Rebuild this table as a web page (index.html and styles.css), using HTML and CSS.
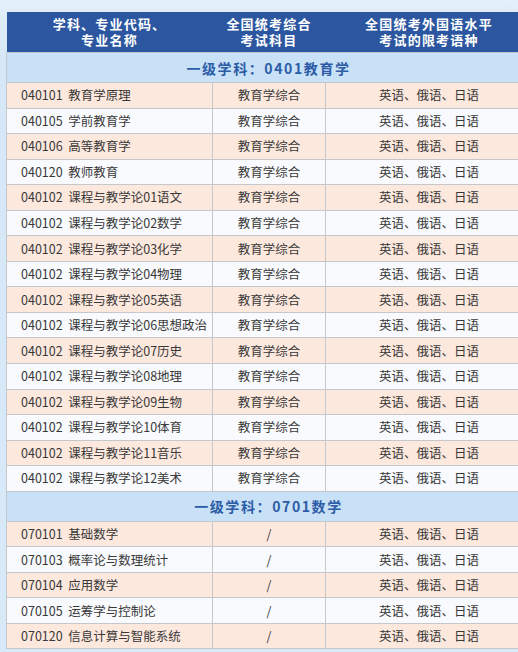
FILE: index.html
```html
<!DOCTYPE html>
<html lang="zh">
<head>
<meta charset="utf-8">
<link rel="stylesheet" href="styles.css">
</head>
<body>
<div class="page">
<table class="tbl">
  <colgroup><col class="c1"><col class="c2"><col class="c3"></colgroup>
  <thead>
    <tr class="head">
      <th>学科、专业代码、<br>专业名称</th>
      <th>全国统考综合<br>考试科目</th>
      <th>全国统考外国语水平<br>考试的限考语种</th>
    </tr>
  </thead>
  <tbody>
    <tr class="sec"><td colspan="3">一级学科：0401教育学</td></tr>
    <tr class="odd"><td class="name">040101&nbsp;&nbsp;教育学原理</td><td>教育学综合</td><td>英语、俄语、日语</td></tr>
    <tr class="even"><td class="name">040105&nbsp;&nbsp;学前教育学</td><td>教育学综合</td><td>英语、俄语、日语</td></tr>
    <tr class="odd"><td class="name">040106&nbsp;&nbsp;高等教育学</td><td>教育学综合</td><td>英语、俄语、日语</td></tr>
    <tr class="even"><td class="name">040120&nbsp;&nbsp;教师教育</td><td>教育学综合</td><td>英语、俄语、日语</td></tr>
    <tr class="odd"><td class="name">040102&nbsp;&nbsp;课程与教学论01语文</td><td>教育学综合</td><td>英语、俄语、日语</td></tr>
    <tr class="even"><td class="name">040102&nbsp;&nbsp;课程与教学论02数学</td><td>教育学综合</td><td>英语、俄语、日语</td></tr>
    <tr class="odd"><td class="name">040102&nbsp;&nbsp;课程与教学论03化学</td><td>教育学综合</td><td>英语、俄语、日语</td></tr>
    <tr class="even"><td class="name">040102&nbsp;&nbsp;课程与教学论04物理</td><td>教育学综合</td><td>英语、俄语、日语</td></tr>
    <tr class="odd"><td class="name">040102&nbsp;&nbsp;课程与教学论05英语</td><td>教育学综合</td><td>英语、俄语、日语</td></tr>
    <tr class="even"><td class="name">040102&nbsp;&nbsp;课程与教学论06思想政治</td><td>教育学综合</td><td>英语、俄语、日语</td></tr>
    <tr class="odd"><td class="name">040102&nbsp;&nbsp;课程与教学论07历史</td><td>教育学综合</td><td>英语、俄语、日语</td></tr>
    <tr class="even"><td class="name">040102&nbsp;&nbsp;课程与教学论08地理</td><td>教育学综合</td><td>英语、俄语、日语</td></tr>
    <tr class="odd"><td class="name">040102&nbsp;&nbsp;课程与教学论09生物</td><td>教育学综合</td><td>英语、俄语、日语</td></tr>
    <tr class="even"><td class="name">040102&nbsp;&nbsp;课程与教学论10体育</td><td>教育学综合</td><td>英语、俄语、日语</td></tr>
    <tr class="odd"><td class="name">040102&nbsp;&nbsp;课程与教学论11音乐</td><td>教育学综合</td><td>英语、俄语、日语</td></tr>
    <tr class="even"><td class="name">040102&nbsp;&nbsp;课程与教学论12美术</td><td>教育学综合</td><td>英语、俄语、日语</td></tr>
    <tr class="sec"><td colspan="3">一级学科：0701数学</td></tr>
    <tr class="odd"><td class="name">070101&nbsp;&nbsp;基础数学</td><td>/</td><td>英语、俄语、日语</td></tr>
    <tr class="even"><td class="name">070103&nbsp;&nbsp;概率论与数理统计</td><td>/</td><td>英语、俄语、日语</td></tr>
    <tr class="odd"><td class="name">070104&nbsp;&nbsp;应用数学</td><td>/</td><td>英语、俄语、日语</td></tr>
    <tr class="even"><td class="name">070105&nbsp;&nbsp;运筹学与控制论</td><td>/</td><td>英语、俄语、日语</td></tr>
    <tr class="odd"><td class="name">070120&nbsp;&nbsp;信息计算与智能系统</td><td>/</td><td>英语、俄语、日语</td></tr>
  </tbody>
</table>
</div>
</body>
</html>
```

FILE: styles.css
```css
html, body {
  margin: 0;
  padding: 0;
  width: 518px;
  height: 652px;
  overflow: hidden;
  background: linear-gradient(#e3eff9, #d6e8f7 60px, #d8e9f8);
  font-family: "Noto Sans CJK SC", "Noto Sans", sans-serif;
}
.page {
  padding: 12px 0 0 6px;
}
.tbl {
  border-collapse: collapse;
  table-layout: fixed;
  width: 526px;
}
.c1 { width: 206px; }
.c2 { width: 113px; }
.c3 { width: 207px; }
.head th {
  background: #2c57a0;
  color: #ffffff;
  font-weight: 700;
  font-size: 13px;
  letter-spacing: 1.2px;
  line-height: 16px;
  height: 40px;
  padding: 0;
  text-align: center;
  vertical-align: middle;
}
.tbl td {
  border: 1px solid #c4c7cb;
  font-size: 12.5px;
  color: #383838;
  height: 24.55px;
  padding: 0;
  text-align: center;
  vertical-align: middle;
  line-height: 14px;
}
.tbl td.name {
  text-align: left;
  padding-left: 14px;
}
.sec td {
  background: #c8e1f6;
  color: #2c5ca6;
  font-weight: 700;
  font-size: 14px;
  letter-spacing: 1.6px;
  height: 29px;
  padding-right: 2px;
}
.odd td { background: #fde8de; }
.even td { background: #f8fafd; }
```
